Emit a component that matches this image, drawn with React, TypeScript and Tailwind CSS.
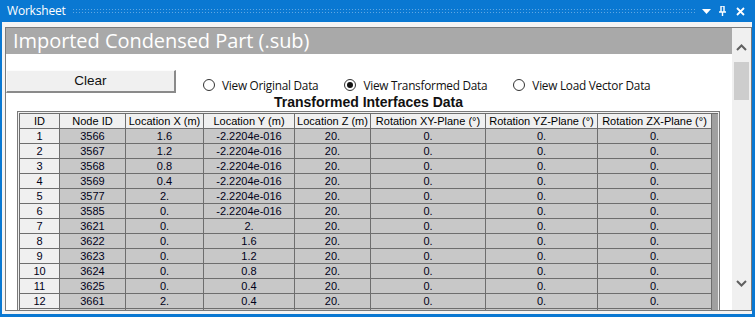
import React from "react";

const headers = [
  "ID",
  "Node ID",
  "Location X (m)",
  "Location Y (m)",
  "Location Z (m)",
  "Rotation XY-Plane (°)",
  "Rotation YZ-Plane (°)",
  "Rotation ZX-Plane (°)",
];

const rows: string[][] = [
  ["1", "3566", "1.6", "-2.2204e-016"],
  ["2", "3567", "1.2", "-2.2204e-016"],
  ["3", "3568", "0.8", "-2.2204e-016"],
  ["4", "3569", "0.4", "-2.2204e-016"],
  ["5", "3577", "2.", "-2.2204e-016"],
  ["6", "3585", "0.", "-2.2204e-016"],
  ["7", "3621", "0.", "2."],
  ["8", "3622", "0.", "1.6"],
  ["9", "3623", "0.", "1.2"],
  ["10", "3624", "0.", "0.8"],
  ["11", "3625", "0.", "0.4"],
  ["12", "3661", "2.", "0.4"],
].map((r) => [...r, "20.", "0.", "0.", "0."]);

function Radio({ label, checked }: { label: string; checked?: boolean }) {
  return (
    <div className="flex items-center gap-[7px]">
      <div className="w-[12px] h-[12px] rounded-full border border-[#333] bg-white flex items-center justify-center">
        {checked && <div className="w-[6px] h-[6px] rounded-full bg-[#111]" />}
      </div>
      <span className="text-[11.8px] leading-[14px] text-[#111] font-['Open_Sans',sans-serif] tracking-[-0.25px]">
        {label}
      </span>
    </div>
  );
}

function Chevron({ up }: { up?: boolean }) {
  return (
    <svg width="11" height="7" viewBox="0 0 11 7" className="text-[#606060]">
      <path
        d={up ? "M1 6 L5.5 1.5 L10 6" : "M1 1 L5.5 5.5 L10 1"}
        fill="none"
        stroke="currentColor"
        strokeWidth={2}
      />
    </svg>
  );
}

export default function App() {
  return (
    <div className="w-[755px] h-[317px] bg-[#0a78d2] flex flex-col pl-[2px] pr-[3px] pb-[3px] overflow-hidden">
      {/* title bar */}
      <div className="h-[22px] shrink-0 flex items-center text-white -ml-[2px] -mr-[3px] pl-[7px] pr-[10px]">
        <span className="text-[12px] font-['Open_Sans',sans-serif] tracking-[-0.2px]">Worksheet</span>
        <div className="flex-1 h-[7px] ml-[6px] mr-[6px] bg-[radial-gradient(circle,#5fa7e3_0.8px,transparent_0.9px)] bg-[length:3px_3px]" />
        <svg width="9" height="5" viewBox="0 0 9 5" className="mr-[8px]">
          <path d="M0 0 H9 L4.5 5 Z" fill="white" />
        </svg>
        <svg width="8" height="10" viewBox="0 0 8 10" className="mr-[9px]">
          <path d="M2 0 V6 M5 0 V6 M2 0 H5 M0 6 H7 M3.5 6 V10" stroke="white" strokeWidth={1.4} fill="none" />
        </svg>
        <svg width="9" height="9" viewBox="0 0 9 9">
          <path d="M1 1 L8 8 M8 1 L1 8" stroke="white" strokeWidth={1.8} />
        </svg>
      </div>

      {/* body */}
      <div className="flex-1 min-h-0 bg-[#f4f4f4] pl-[3px] pt-[5px] pb-[3px] flex">
        <div className="flex-1 min-h-0 border border-[#7a7a7a] flex bg-white overflow-hidden">
          {/* main column */}
          <div className="w-[726px] flex flex-col overflow-hidden">
            <div className="h-[26px] shrink-0 bg-[#a9a9a9] flex items-center pl-[7px]">
              <span className="text-white text-[20px] leading-[24px] font-['Open_Sans',sans-serif] tracking-[-0.05px]">
                Imported Condensed Part (.sub)
              </span>
            </div>

            <div className="flex items-start mt-[16px] shrink-0">
              <div className="w-[170px] h-[23px] bg-[#f0f0f0] border-t border-l border-[#fcfcfc] border-b-2 border-r-2 border-b-[#8a8a8a] border-r-[#8a8a8a] flex items-center justify-center">
                <span className="text-[13.5px] text-[#111] font-['Liberation_Sans',sans-serif]">Clear</span>
              </div>
              <div className="flex items-center mt-[8px] h-[14px] ml-[27px]">
                <Radio label="View Original Data" />
                <div className="w-[26px]" />
                <Radio label="View Transformed Data" checked />
                <div className="w-[26px]" />
                <Radio label="View Load Vector Data" />
              </div>
            </div>

            <div className="ml-[11px] w-[703px] flex flex-col shrink-0">
              <div className="h-[15px] mt-[2px] flex items-center justify-center">
                <span className="text-[14px] font-bold text-[#111] font-['Liberation_Sans',sans-serif]">
                  Transformed Interfaces Data
                </span>
              </div>
              <div className="mt-[1px] border border-[#7a7a7a] bg-[#f0f0f0] pl-[1px] pt-[1px] pr-[1px]">
                <div className="bg-[#a0a0a0] w-[699px] border-l border-t border-[#6e6e6e]">
                  <div className="grid grid-cols-[40px_66px_78px_91px_76px_115px_112px_114px] w-[692px]">
                    {headers.map((h) => (
                      <div
                        key={h}
                        className="h-[15px] bg-[#f0f0f0] border-r border-b border-[#6e6e6e] flex items-center justify-center text-[11px] leading-[14px] text-[#000] font-['Liberation_Sans',sans-serif] whitespace-nowrap"
                      >
                        {h}
                      </div>
                    ))}
                    {rows.map((r) =>
                      r.map((c, i) => (
                        <div
                          key={r[0] + "-" + i}
                          className={
                            "h-[15px] border-r border-b border-[#6e6e6e] flex items-center justify-center text-[11px] leading-[14px] text-[#000018] font-['Liberation_Sans',sans-serif] " +
                            (i === 0 ? "bg-[#f0f0f0]" : "bg-[#c8c8c8]")
                          }
                        >
                          {c}
                        </div>
                      ))
                    )}
                    {headers.map((h, i) => (
                      <div
                        key={"e" + h}
                        className={
                          "h-[15px] border-r border-b border-[#6e6e6e] " +
                          (i === 0 ? "bg-[#f0f0f0]" : "bg-[#c8c8c8]")
                        }
                      />
                    ))}
                  </div>
                </div>
              </div>
            </div>
          </div>

          {/* scrollbar */}
          <div className="flex-1 bg-[#f0f0f0] flex flex-col items-center">
            <div className="h-[33px] flex items-center justify-center pt-[6px]">
              <Chevron up />
            </div>
            <div className="w-[15px] h-[38px] bg-[#cdcdcd] mt-[1px]" />
            <div className="flex-1" />
            <div className="h-[30px] flex items-start justify-center">
              <Chevron />
            </div>
          </div>
        </div>
      </div>
    </div>
  );
}
